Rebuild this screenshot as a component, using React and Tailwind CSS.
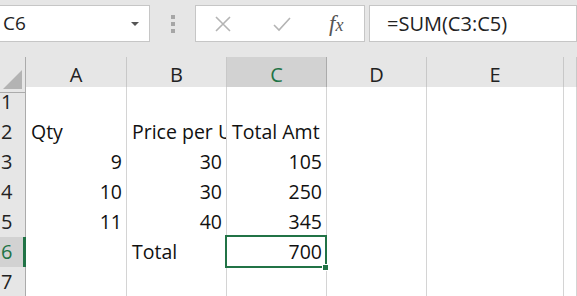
import React from 'react'

const COLS = ['A', 'B', 'C', 'D', 'E', '']
const ROWS = [
  ['', '', '', '', '', ''],
  ['Qty', 'Price per U', 'Total Amt', '', '', ''],
  [9, 30, 105, '', '', ''],
  [10, 30, 250, '', '', ''],
  [11, 40, 345, '', '', ''],
  ['', 'Total', 700, '', '', ''],
  ['', '', '', '', '', ''],
]

const font = { fontFamily: '"Open Sans", Lato, sans-serif' }

function FormulaBar() {
  return (
    <div className="flex h-[57px] items-start bg-[#e6e6e6] pt-[5px]">
      <div className="ml-[-1px] flex h-[37px] w-[151px] items-center justify-between border border-[#c6c6c6] bg-white pl-[3px] pr-[9px]">
        <span className="text-[19px] text-[#222]">C6</span>
        <svg width="10" height="6" viewBox="0 0 10 6"><path d="M1 1 L5 5 L9 1 Z" fill="#555" /></svg>
      </div>
      <div className="ml-[21px] mt-[10px] flex flex-col gap-[3px]">
        <span className="block h-[4px] w-[4px] bg-[#a6a6a6]" />
        <span className="block h-[4px] w-[4px] bg-[#a6a6a6]" />
        <span className="block h-[4px] w-[4px] bg-[#a6a6a6]" />
      </div>
      <div className="ml-[20px] flex h-[37px] w-[170px] items-center border border-[#c6c6c6] bg-white">
        <svg className="ml-[19px]" width="16" height="16" viewBox="0 0 16 16">
          <path d="M1 1 L15 15 M15 1 L1 15" stroke="#b4b4b4" strokeWidth="1.6" />
        </svg>
        <svg className="ml-[42px]" width="18" height="16" viewBox="0 0 18 16">
          <path d="M1 9 L6 14 L17 2" stroke="#b4b4b4" strokeWidth="1.6" fill="none" />
        </svg>
        <span className="ml-[38px] text-[23px] italic leading-none text-[#555]" style={{ fontFamily: '"Liberation Serif", serif' }}>
          f<span className="text-[18px]">x</span>
        </span>
      </div>
      <div className="ml-[4px] flex h-[37px] flex-1 items-center border border-[#c6c6c6] bg-white pl-[17px]">
        <span className="text-[20px] text-[#222]">=SUM(C3:C5)</span>
      </div>
    </div>
  )
}

function Grid() {
  const tpl = 'grid grid-cols-[26px_101px_100px_100px_100px_137px_1fr]'
  return (
    <div>
      <div className={`${tpl} h-[30px] bg-[#e6e6e6]`}>
        <div className="relative border-r border-b border-[#ababab]">
          <svg className="absolute bottom-[3px] right-[3px]" width="19" height="19" viewBox="0 0 19 19">
            <path d="M19 0 L19 19 L0 19 Z" fill="#b3b3b3" />
          </svg>
        </div>
        {COLS.map((c, i) => {
          const sel = c === 'C'
          return (
            <div
              key={i}
              className={
                sel
                  ? 'flex items-center justify-center border-r border-b-[3px] border-r-[#ababab] border-b-[#217346] bg-[#d2d2d2] pt-[3px] text-[20px] text-[#217346]'
                  : 'flex items-center justify-center border-r border-b border-r-[#c8c8c8] border-b-[#ababab] text-[20px] text-[#222]'
              }
            >
              {c}
            </div>
          )
        })}
      </div>
      {ROWS.map((r, ri) => {
        const rowSel = ri === 5
        return (
          <div key={ri} className={`${tpl} h-[30px]`}>
            <div
              className={
                rowSel
                  ? 'flex items-center border-r-[3px] border-b border-r-[#217346] border-b-[#d4d4d4] bg-[#d2d2d2] pl-[1px] text-[20px] text-[#217346]'
                  : 'flex items-center border-r border-b border-r-[#ababab] border-b-[#d4d4d4] bg-[#e6e6e6] pl-[1px] text-[20px] text-[#222]'
              }
            >
              {ri + 1}
            </div>
            {r.map((v, ci) => {
              const num = typeof v === 'number'
              const active = rowSel && ci === 2
              return (
                <div
                  key={ci}
                  className={`relative flex items-center whitespace-nowrap border-r border-b border-[#d4d4d4] bg-white text-[19.5px] text-[#111] ${active ? 'z-10' : ''} ${num ? 'justify-end pr-[4px]' : 'justify-start pl-[5px]'}`}
                >
                  {active && (
                    <>
                      <div className="absolute left-[-2px] top-[-2px] h-[33px] w-[102px] border-2 border-[#217346]" />
                      <div className="absolute right-[-3px] bottom-[-4px] h-[7px] w-[7px] border border-white bg-[#217346]" />
                    </>
                  )}
                  <span className={ci === 1 && ri === 1 ? 'block w-[95px] overflow-hidden' : ''}>{v}</span>
                </div>
              )
            })}
          </div>
        )
      })}
    </div>
  )
}

export default function App() {
  return (
    <div className="h-[296px] w-[577px] overflow-hidden bg-white" style={font}>
      <FormulaBar />
      <Grid />
    </div>
  )
}
